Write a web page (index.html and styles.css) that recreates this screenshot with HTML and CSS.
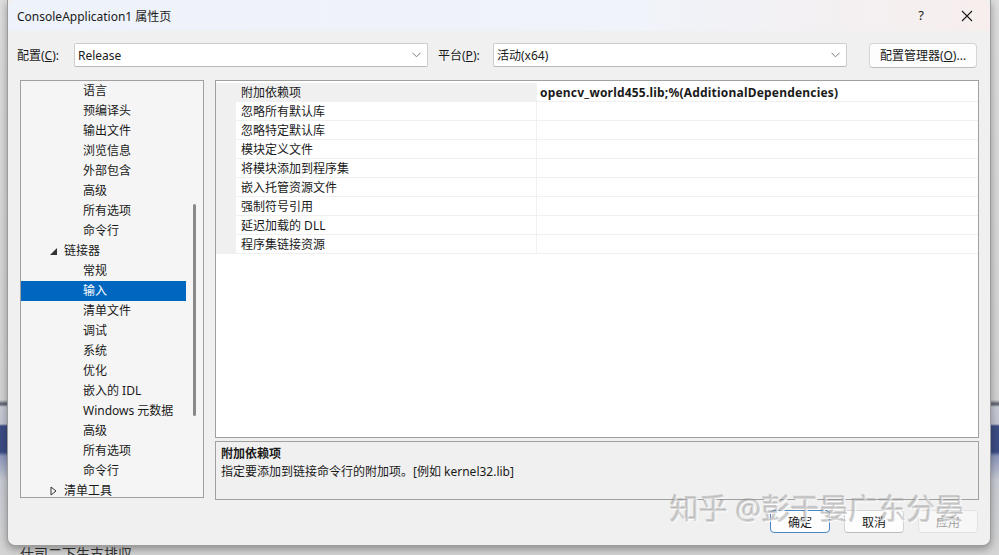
FILE: index.html
```html
<!DOCTYPE html>
<html lang="zh-CN">
<head>
    <meta charset="UTF-8">
    <title>ConsoleApplication1 属性页</title>
    <link rel="stylesheet" href="styles.css">
</head>
<body>
    <div class="dialog">
        <div class="titlebar">
            <span class="title">ConsoleApplication1 属性页</span>
            <div class="caption">
                <span class="capBtn help">?</span>
                <span class="capBtn">
                    <svg width="12" height="12" viewBox="0 0 12 12"><path d="M1 1 L11 11 M11 1 L1 11" stroke="#1a1a1a" stroke-width="1.1" fill="none"/></svg>
                </span>
            </div>
        </div>

        <div class="configRow">
            <span class="configLabel">配置(<u>C</u>):</span>
            <div class="combo">
                <span>Release</span>
                <svg class="chevron" width="9" height="6" viewBox="0 0 9 6"><path d="M0.5 0.8 L4.5 4.8 L8.5 0.8" stroke="#7a7a7a" stroke-width="1" fill="none"/></svg>
            </div>
            <span class="configLabel platform">平台(<u>P</u>):</span>
            <div class="combo">
                <span>活动(x64)</span>
                <svg class="chevron" width="9" height="6" viewBox="0 0 9 6"><path d="M0.5 0.8 L4.5 4.8 L8.5 0.8" stroke="#7a7a7a" stroke-width="1" fill="none"/></svg>
            </div>
            <button class="button manager">配置管理器(<u>O</u>)...</button>
        </div>

        <div class="main">
            <div class="tree">
                <ul class="treeList">
                    <li class="child">语言</li>
                    <li class="child">预编译头</li>
                    <li class="child">输出文件</li>
                    <li class="child">浏览信息</li>
                    <li class="child">外部包含</li>
                    <li class="child">高级</li>
                    <li class="child">所有选项</li>
                    <li class="child">命令行</li>
                    <li class="parent">
                        <svg class="twisty" width="7" height="7" viewBox="0 0 7 7"><polygon points="7,0 7,7 0,7" fill="#333"/></svg>链接器
                    </li>
                    <li class="child">常规</li>
                    <li class="child selected">输入</li>
                    <li class="child">清单文件</li>
                    <li class="child">调试</li>
                    <li class="child">系统</li>
                    <li class="child">优化</li>
                    <li class="child">嵌入的 IDL</li>
                    <li class="child">Windows 元数据</li>
                    <li class="child">高级</li>
                    <li class="child">所有选项</li>
                    <li class="child">命令行</li>
                    <li class="parent">
                        <svg class="twisty" width="7" height="10" viewBox="0 0 7 10"><polygon points="1,1 6,5 1,9" fill="none" stroke="#333" stroke-width="1"/></svg>清单工具
                    </li>
                </ul>
                <div class="scrollbar"><div class="thumb"></div></div>
            </div>

            <div class="rightPane">
                <div class="grid">
                    <div class="propRow current"><span class="gutter"></span><span class="name">附加依赖项</span><span class="value">opencv_world455.lib;%(AdditionalDependencies)</span></div>
                    <div class="propRow"><span class="gutter"></span><span class="name">忽略所有默认库</span><span class="value"></span></div>
                    <div class="propRow"><span class="gutter"></span><span class="name">忽略特定默认库</span><span class="value"></span></div>
                    <div class="propRow"><span class="gutter"></span><span class="name">模块定义文件</span><span class="value"></span></div>
                    <div class="propRow"><span class="gutter"></span><span class="name">将模块添加到程序集</span><span class="value"></span></div>
                    <div class="propRow"><span class="gutter"></span><span class="name">嵌入托管资源文件</span><span class="value"></span></div>
                    <div class="propRow"><span class="gutter"></span><span class="name">强制符号引用</span><span class="value"></span></div>
                    <div class="propRow"><span class="gutter"></span><span class="name">延迟加载的 DLL</span><span class="value"></span></div>
                    <div class="propRow"><span class="gutter"></span><span class="name">程序集链接资源</span><span class="value"></span></div>
                </div>
                <div class="desc">
                    <div class="descTitle">附加依赖项</div>
                    <div class="descText">指定要添加到链接命令行的附加项。[例如 kernel32.lib]</div>
                </div>
            </div>
        </div>

        <div class="footer">
            <button class="button default">确定</button>
            <button class="button">取消</button>
            <button class="button disabled">应用</button>
        </div>

        <div class="watermark">知乎 @彭于晏广东分晏</div>
    </div>
    <div class="below">仕司二下生支排収</div>
</body>
</html>
```

FILE: styles.css
```css
html, body {
    margin: 0;
    padding: 0;
}
body {
    width: 999px;
    height: 555px;
    overflow: hidden;
    font-family: "Noto Sans", "Noto Sans CJK SC", sans-serif;
    font-size: 12px;
    color: #1a1a1a;
    background: linear-gradient(to bottom,
        #dedede 0px, #d4d4d4 400px,
        #555a66 404px, #c9ccd6 407px,
        #c2c6d2 424px, #3c4d84 426px,
        #3c4d84 452px, #8c97bc 456px,
        #c9ccd4 480px, #d4d4d4 545px);
}
.dialog {
    position: relative;
    box-sizing: border-box;
    width: 984px;
    height: 546px;
    margin-left: 7px;
    background-color: #f0f0f0;
    border: 1px solid #9c9c9c;
    border-top: none;
    border-radius: 0 0 8px 8px;
    box-shadow: 0 3px 8px rgba(0, 0, 0, 0.35);
    display: flex;
    flex-direction: column;
}
.titlebar {
    height: 31px;
    display: flex;
    align-items: center;
    justify-content: space-between;
    background: linear-gradient(90deg, #eef2fa 0%, #f0f3f9 65%, #f7eeed 100%);
    border-radius: 8px 8px 0 0;
}
.title {
    padding-left: 9px;
    font-size: 12px;
}
.caption {
    display: flex;
    height: 31px;
}
.capBtn {
    width: 46px;
    display: flex;
    align-items: center;
    justify-content: center;
}
.help {
    font-size: 13px;
    padding-bottom: 2px;
}
.configRow {
    display: flex;
    align-items: center;
    margin-top: 11px;
    padding-left: 9px;
    height: 26px;
}
.configLabel {
    width: 57px;
    white-space: nowrap;
}
.platform {
    margin-left: 10px;
    width: 55px;
}
.combo {
    box-sizing: border-box;
    width: 354px;
    height: 24px;
    background-color: #ffffff;
    border: 1px solid #cdcdcd;
    border-bottom-color: #b8b8b8;
    border-radius: 2px;
    display: flex;
    align-items: center;
    justify-content: space-between;
    padding: 0 6px 0 3px;
}
.button {
    box-sizing: border-box;
    font-family: inherit;
    font-size: 12px;
    color: #1a1a1a;
    background-color: #fdfdfd;
    border: 1px solid #d4d4d4;
    border-bottom-color: #bcbcbc;
    border-radius: 4px;
    padding: 0;
}
.manager {
    margin-left: 22px;
    width: 108px;
    height: 25px;
}
.main {
    display: flex;
    margin-top: 12px;
    padding-left: 12px;
    height: 420px;
}
.tree {
    box-sizing: border-box;
    width: 184px;
    height: 418px;
    background-color: #f5f5f5;
    border: 1px solid #a0a0a0;
    display: flex;
    overflow: hidden;
}
.treeList {
    list-style: none;
    margin: 0;
    padding: 0;
    flex: 1;
}
.treeList li {
    height: 20px;
    line-height: 20px;
    white-space: nowrap;
}
.child {
    padding-left: 62px;
}
.parent {
    padding-left: 29px;
    display: flex;
    align-items: center;
}
.twisty {
    margin-right: 7px;
}
.selected {
    background-color: #0067c0;
    color: #ffffff;
}
.scrollbar {
    width: 17px;
    display: flex;
    justify-content: center;
}
.thumb {
    width: 3px;
    height: 212px;
    margin-top: 123px;
    background-color: #8a8a8a;
    border-radius: 2px;
}
.rightPane {
    margin-left: 11px;
    width: 764px;
    display: flex;
    flex-direction: column;
}
.grid {
    box-sizing: border-box;
    height: 358px;
    background-color: #ffffff;
    border: 1px solid #a0a0a0;
    padding-top: 2px;
}
.propRow {
    display: flex;
    height: 19px;
    line-height: 20px;
}
.gutter {
    width: 20px;
    background-color: #f0f0f0;
}
.name {
    box-sizing: border-box;
    width: 301px;
    padding-left: 5px;
    border-bottom: 1px solid #f0f0f0;
    border-right: 1px solid #f0f0f0;
}
.current .name {
    background-color: #f0f0f0;
}
.value {
    flex: 1;
    padding-left: 3px;
    border-bottom: 1px solid #f0f0f0;
    font-weight: bold;
    letter-spacing: 0.2px;
}
.desc {
    box-sizing: border-box;
    margin-top: 3px;
    height: 59px;
    border: 1px solid #a0a0a0;
    padding: 3px 5px;
    line-height: 18px;
}
.descTitle {
    font-weight: bold;
}
.footer {
    display: flex;
    justify-content: flex-end;
    margin-top: 10px;
    padding-right: 12px;
}
.footer .button {
    width: 60px;
    height: 23px;
    margin-left: 14px;
}
.default {
    border: 1px solid #4a86c4;
}
.disabled {
    color: #a0a0a0;
    background-color: #f7f7f7;
    border-color: #e2e2e2;
}
.watermark {
    position: absolute;
    left: 662px;
    top: 491px;
    font-size: 29px;
    line-height: 36px;
    white-space: nowrap;
    color: rgba(175, 175, 175, 0.5);
    text-shadow: 1px 1px 0 rgba(255, 255, 255, 0.9), -1px -1px 0 rgba(110, 110, 110, 0.3);
}
.below {
    height: 9px;
    margin-left: 20px;
    font-size: 14px;
    line-height: 14px;
    color: #333333;
    overflow: hidden;
    padding-top: 1px;
}
```
